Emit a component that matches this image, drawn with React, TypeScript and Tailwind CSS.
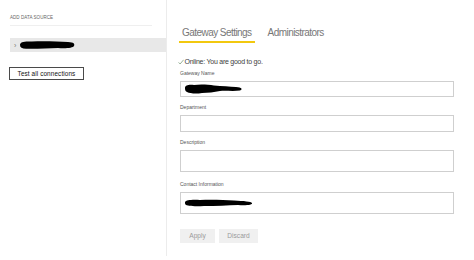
import React from "react";

const font = { fontFamily: '"Liberation Sans", Arial, sans-serif' };

function Blob({ w, h, d }: { w: number; h: number; d: string }) {
  return (
    <svg width={w} height={h} viewBox={`0 0 ${w} ${h}`} className="block">
      <path d={d} fill="#000" />
    </svg>
  );
}

function Field({ label, h, mt, children }: { label: string; h: string; mt: string; children?: React.ReactNode }) {
  return (
    <div className={mt}>
      <div className="text-[5px] leading-[6px] h-[6px] text-[#555]">{label}</div>
      <div className={`mt-[5px] ${h} w-full border border-[#cfcfcf] bg-white flex items-center pl-[3px]`}>{children}</div>
    </div>
  );
}

export default function App() {
  return (
    <div className="w-[474px] h-[260px] bg-white flex" style={font}>
      <div className="w-[167px] h-[256px] border-r border-[#ececec] flex flex-col pl-[10px]">
        <div className="mt-[15px] text-[4.5px] leading-[6px] h-[6px] text-[#666] tracking-[0.05px]">ADD DATA SOURCE</div>
        <div className="mt-[4px] w-[142px] border-t border-[#efefef]" />
        <div className="mt-[12px] h-[14px] bg-[#e8e8e8] flex items-center">
          <span className="ml-[4px] text-[7px] leading-none text-[#777]">›</span>
          <div className="ml-[2px]">
            <Blob w={58} h={10} d="M2 5 C2 2 6 1 14 1.5 C26 1 40 1.5 50 2 C56 2.3 57 4 56 6 C55 8 48 8.5 40 8 C30 8.5 18 9 8 8.8 C4 8.8 2 7.5 2 5 Z" />
          </div>
        </div>
        <div className="mt-[15px] w-[75px] h-[13px] border border-[#4a4a4a] flex items-center justify-center text-[6.4px] text-[#111] -ml-[1px] tracking-[0.1px]">
          Test all connections
        </div>
      </div>
      <div className="pl-[12px] w-[288px] flex flex-col">
        <div className="mt-[25px] flex items-start">
          <div className="h-[18px] border-b-2 border-[#f2c80f] px-[3px] text-[10px] leading-[16px] text-[#777] tracking-[-0.55px]">
            Gateway Settings
          </div>
          <div className="ml-[13px] text-[10px] leading-[16px] text-[#777] tracking-[-0.55px]">Administrators</div>
        </div>
        <div className="pl-[1px] w-[275px] flex flex-col">
          <div className="mt-[14px] flex items-center h-[10px]">
            <svg width="6" height="6" viewBox="0 0 6 6" className="-ml-[2px] mr-[0.5px]">
              <path d="M0.6 3.4 L2.1 5 L5.6 0.8" stroke="#7fa07f" strokeWidth="0.8" fill="none" />
            </svg>
            <span className="text-[7px] leading-[10px] text-[#3d3d3d] tracking-[-0.25px]">Online: You are good to go.</span>
          </div>
          <Field label="Gateway Name" h="h-[16px]" mt="mt-[3px]">
            <Blob w={60} h={12} d="M1 5 C1 2 5 1.5 10 2 C16 1 24 1.5 30 2.5 C38 3 46 3.5 52 4 C58 4.5 59 6.5 56 7.5 C50 8.5 42 7.5 36 8 C30 9 24 10 18 10 C12 11 6 10.5 3 9 C1 8 1 6.5 1 5 Z" />
          </Field>
          <Field label="Department" h="h-[17px]" mt="mt-[7px]" />
          <Field label="Description" h="h-[22px]" mt="mt-[7px]" />
          <Field label="Contact Information" h="h-[22px]" mt="mt-[9px]">
            <Blob w={70} h={10} d="M1 4 C2 2 8 1.5 16 2 C28 1.5 40 2 50 2.5 C60 3 67 3.5 68 5 C69 7 62 7.5 54 7 C44 7.5 32 8 20 8 C10 8.5 3 8 1.5 6.5 C1 6 1 5 1 4 Z" />
          </Field>
          <div className="mt-[15px] flex gap-[4px]">
            <div className="w-[35px] h-[14px] bg-[#f0f0f0] flex items-center justify-center text-[6.6px] text-[#9a9a9a]">Apply</div>
            <div className="w-[39px] h-[14px] bg-[#f0f0f0] flex items-center justify-center text-[6.6px] text-[#9a9a9a]">Discard</div>
          </div>
        </div>
      </div>
    </div>
  );
}
